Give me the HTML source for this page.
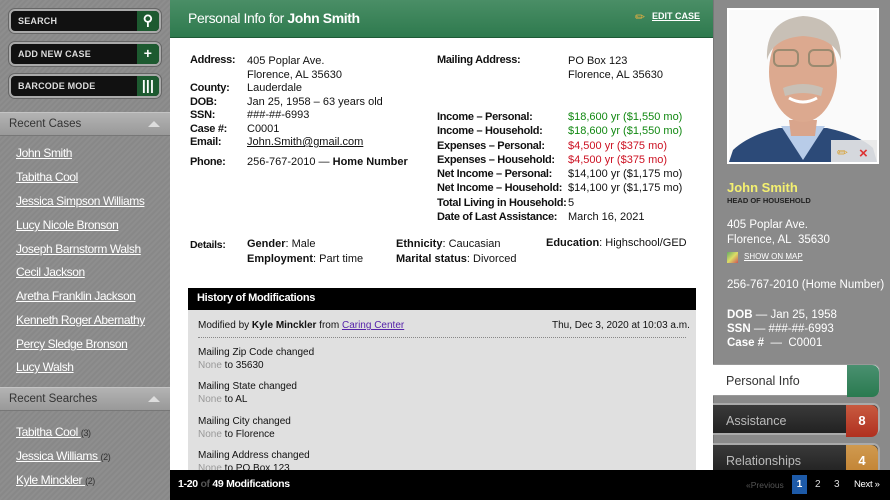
<!DOCTYPE html>
<html><head><meta charset="utf-8"><style>
*{margin:0;padding:0;box-sizing:border-box}
body{width:890px;height:500px;overflow:hidden;font-family:"Liberation Sans",sans-serif;background:#fff;position:relative;font-size:11px;color:#111}
.a{position:absolute;white-space:nowrap}
#side{position:absolute;left:0;top:0;width:170px;height:500px;background:repeating-linear-gradient(135deg,#8e8e8e 0 2px,#888 2px 4px)}
.btn{position:absolute;left:9px;width:152px;height:24px;border-radius:6px;background:#111;border:2px solid #aaa;box-shadow:0 0 0 1px #666;color:#ddd;font-size:9px;font-weight:bold;padding:5px 0 0 7px;letter-spacing:.2px}
.btn i{position:absolute;right:0;top:0;width:22px;height:20px;background:#1d5a30;border-radius:0 4px 4px 0;color:#fff;font-style:normal;text-align:center;font-size:14px;line-height:19px}
.sh{position:absolute;left:0;width:170px;height:24px;background:linear-gradient(#b3b3b3,#999);border-top:1px solid #c4c4c4;border-bottom:1px solid #777;color:#333;font-size:11.5px;padding:5px 0 0 9px}
.sh:after{content:"";position:absolute;right:10px;top:8px;border:6px solid transparent;border-bottom:6px solid #ddd;border-top:0}
.lk{position:absolute;left:16px;color:#fff;text-decoration:underline;font-size:12px;letter-spacing:-.4px}
.lk small{font-size:9px;color:#333;text-decoration:none;display:inline-block}
#hdr{position:absolute;left:170px;top:0;width:543px;height:38px;background:linear-gradient(#4a8e66,#2e7a4e);border-bottom:1px solid #1e5a36}
.lb{font-weight:bold;letter-spacing:-.3px}
.g{color:#118811}.r{color:#cc1122}
#right{position:absolute;left:713px;top:0;width:177px;height:470px;background:#8a8a8a;border-left:1px solid #777}
.tab{position:absolute;left:713px;width:167px;height:32px;border-radius:0 7px 7px 0;font-size:12.5px;padding:9px 0 0 13px}
.tab b{position:absolute;right:0;top:0;width:32px;height:32px;border-radius:0 7px 7px 0;color:#fff;text-align:center;line-height:32px;font-size:13px}
</style></head><body>
<div id="side">
<div class="btn" style="top:9px">SEARCH<i>&#9906;</i></div>
<div class="btn" style="top:42px">ADD NEW CASE<i>+</i></div>
<div class="btn" style="top:74px">BARCODE MODE<i>|||</i></div>
<div class="sh" style="top:112px">Recent Cases</div>
<div class="lk" style="top:146px">John Smith</div>
<div class="lk" style="top:170px">Tabitha Cool</div>
<div class="lk" style="top:194px">Jessica Simpson Williams</div>
<div class="lk" style="top:218px">Lucy Nicole Bronson</div>
<div class="lk" style="top:242px">Joseph Barnstorm Walsh</div>
<div class="lk" style="top:265px">Cecil Jackson</div>
<div class="lk" style="top:289px">Aretha Franklin Jackson</div>
<div class="lk" style="top:313px">Kenneth Roger Abernathy</div>
<div class="lk" style="top:337px">Percy Sledge Bronson</div>
<div class="lk" style="top:360px">Lucy Walsh</div>
<div class="sh" style="top:387px">Recent Searches</div>
<div class="lk" style="top:425px">Tabitha Cool <small>(3)</small></div>
<div class="lk" style="top:449px">Jessica Williams <small>(2)</small></div>
<div class="lk" style="top:473px">Kyle Minckler <small>(2)</small></div>
</div>

<div id="hdr">
<div class="a" style="left:18px;top:10px;color:#fff;font-size:14px;letter-spacing:-.4px">Personal Info for <b>John Smith</b></div>
<div class="a" style="left:465px;top:10px;color:#e8b040;font-size:12px">&#9999;</div>
<div class="a" style="left:482px;top:11px;color:#fff;font-size:9px;font-weight:bold;text-decoration:underline">EDIT CASE</div>
</div>

<div class="a lb" style="left:190px;top:54px">Address:</div>
<div class="a" style="left:247px;top:54px;line-height:14px">405 Poplar Ave.<br>Florence, AL 35630</div>
<div class="a lb" style="left:190px;top:82px;line-height:13.5px">County:<br>DOB:<br>SSN:<br>Case #:<br>Email:</div>
<div class="a" style="left:247px;top:82px;line-height:13.5px">Lauderdale<br>Jan 25, 1958 – 63 years old<br>###-##-6993<br>C0001<br><u>John.Smith@gmail.com</u></div>
<div class="a lb" style="left:190px;top:156px">Phone:</div>
<div class="a" style="left:247px;top:156px">256-767-2010 — <b>Home Number</b></div>

<div class="a lb" style="left:437px;top:54px">Mailing Address:</div>
<div class="a" style="left:568px;top:54px;line-height:14px">PO Box 123<br>Florence, AL 35630</div>
<div class="a lb" style="left:437px;top:110px;line-height:14.3px">Income – Personal:<br>Income – Household:<br>Expenses – Personal:<br>Expenses – Household:<br>Net Income – Personal:<br>Net Income – Household:<br>Total Living in Household:<br>Date of Last Assistance:</div>
<div class="a" style="left:568px;top:110px;line-height:14.3px"><span class="g">$18,600 yr ($1,550 mo)</span><br><span class="g">$18,600 yr ($1,550 mo)</span><br><span class="r">$4,500 yr ($375 mo)</span><br><span class="r">$4,500 yr ($375 mo)</span><br>$14,100 yr ($1,175 mo)<br>$14,100 yr ($1,175 mo)<br>5<br>March 16, 2021</div>

<div class="a lb" style="left:190px;top:239px;font-size:10.5px">Details:</div>
<div class="a" style="left:247px;top:237px;line-height:14.5px"><b>Gender</b>: Male<br><b>Employment</b>: Part time</div>
<div class="a" style="left:396px;top:237px;line-height:14.5px"><b>Ethnicity</b>: Caucasian<br><b>Marital status</b>: Divorced</div>
<div class="a" style="left:546px;top:237px"><b>Education</b>: Highschool/GED</div>

<div class="a" style="left:188px;top:288px;width:508px;height:22px;background:#000;color:#fff;font-weight:bold;padding:4px 0 0 9px;letter-spacing:-.3px">History of Modifications</div>
<div class="a" style="left:188px;top:310px;width:508px;height:160px;background:#e0e0e0"></div>
<div class="a" style="left:198px;top:320px;font-size:10px">Modified by <b>Kyle Minckler</b> from <u style="color:#5522aa">Caring Center</u></div>
<div class="a" style="left:552px;top:320px;font-size:10px">Thu, Dec 3, 2020 at 10:03 a.m.</div>
<div class="a" style="left:198px;top:337px;width:488px;border-top:1px dotted #888"></div>
<div class="a" style="left:198px;top:346px;font-size:10px;line-height:13px">Mailing Zip Code changed<br><span style="color:#999">None</span> to 35630</div>
<div class="a" style="left:198px;top:380px;font-size:10px;line-height:13px">Mailing State changed<br><span style="color:#999">None</span> to AL</div>
<div class="a" style="left:198px;top:415px;font-size:10px;line-height:13px">Mailing City changed<br><span style="color:#999">None</span> to Florence</div>
<div class="a" style="left:198px;top:449px;font-size:10px;line-height:13px">Mailing Address changed<br><span style="color:#999">None</span> to PO Box 123</div>

<div id="right">
<div class="a" style="left:13px;top:8px;width:152px;height:156px;background:#fff;padding:2px;overflow:hidden">
<svg width="148" height="152" viewBox="0 0 148 152">
<rect width="148" height="152" fill="#fafafa"/>
<path d="M0 152 L4 140 Q20 125 50 118 L98 118 Q130 125 144 138 L148 152Z" fill="#2c4a78"/>
<path d="M52 116 L74 150 L96 116Z" fill="#b8cce8"/>
<path d="M60 110 L88 110 L86 126 L62 126Z" fill="#d9a58c"/>
<ellipse cx="74" cy="62" rx="34" ry="50" fill="#dca98f"/>
<path d="M38 50 Q36 10 74 6 Q112 8 112 50 Q106 28 74 26 Q44 28 38 50Z" fill="#c8c0b6"/>
<rect x="45" y="40" width="24" height="16" rx="5" fill="none" stroke="#9a8a70" stroke-width="2"/>
<rect x="80" y="40" width="24" height="16" rx="5" fill="none" stroke="#9a8a70" stroke-width="2"/>
<path d="M54 78 Q74 70 94 78 L92 86 Q74 80 56 86Z" fill="#c8c0b6"/>
<path d="M60 88 Q74 96 88 88" stroke="#fff" stroke-width="3" fill="none"/>
<rect x="102" y="130" width="46" height="22" fill="#e8e8e8" opacity=".9"/>
<text x="108" y="147" font-size="13" fill="#d9a030">&#9999;</text>
<text x="130" y="148" font-size="15" fill="#dd3333" font-weight="bold">&#215;</text>
</svg></div>
<div class="a" style="left:13px;top:180px;color:#f4f070;font-weight:bold;font-size:13px">John Smith</div>
<div class="a" style="left:13px;top:196px;color:#222;font-weight:bold;font-size:7.5px">HEAD OF HOUSEHOLD</div>
<div class="a" style="left:13px;top:218px;color:#fff;font-size:11.5px;line-height:15px">405 Poplar Ave.<br>Florence, AL&nbsp; 35630</div>
<div class="a" style="left:13px;top:252px;width:11px;height:11px;background:linear-gradient(135deg,#6a6,#dd6 50%,#c55)"></div>
<div class="a" style="left:30px;top:252px;color:#fff;font-size:8px;text-decoration:underline">SHOW ON MAP</div>
<div class="a" style="left:13px;top:279px;color:#fff;font-size:11.5px">256-767-2010 (Home Number)</div>
<div class="a" style="left:13px;top:308px;color:#fff;font-size:11.5px;line-height:14px"><b>DOB</b> — Jan 25, 1958<br><b>SSN</b> — ###-##-6993<br><b>Case #</b> &nbsp;— &nbsp;C0001</div>
</div>
<div class="tab" style="top:364px;background:#fff;color:#333;border:1px solid #999;border-left:0">Personal Info<b style="background:linear-gradient(#4a9070,#2a7a50)"></b></div>
<div class="tab" style="top:403px;background:linear-gradient(#3a3a3a,#222);color:#bbb;border:2px solid #aaa;border-left:0">Assistance<b style="background:linear-gradient(#c85a40,#b03020)">8</b></div>
<div class="tab" style="top:443px;background:linear-gradient(#3a3a3a,#222);color:#bbb;border:2px solid #aaa;border-left:0">Relationships<b style="background:linear-gradient(#d09a50,#c08030)">4</b></div>

<div class="a" style="left:170px;top:470px;width:720px;height:30px;background:#000"></div>
<div class="a" style="left:178px;top:478px;color:#fff;font-weight:bold;font-size:10.5px;letter-spacing:-.3px">1-20 <span style="color:#555">of</span> 49 Modifications</div>
<div class="a" style="left:746px;top:480px;color:#555;font-size:8.5px">«Previous</div>
<div class="a" style="left:792px;top:475px;width:15px;height:19px;background:#1d5aa8;color:#fff;font-weight:bold;font-size:10px;text-align:center;line-height:19px">1</div>
<div class="a" style="left:815px;top:479px;color:#ddd;font-size:10px">2</div>
<div class="a" style="left:834px;top:479px;color:#ddd;font-size:10px">3</div>
<div class="a" style="left:854px;top:479px;color:#fff;font-size:9.5px;letter-spacing:-.3px">Next »</div>
</body></html>
